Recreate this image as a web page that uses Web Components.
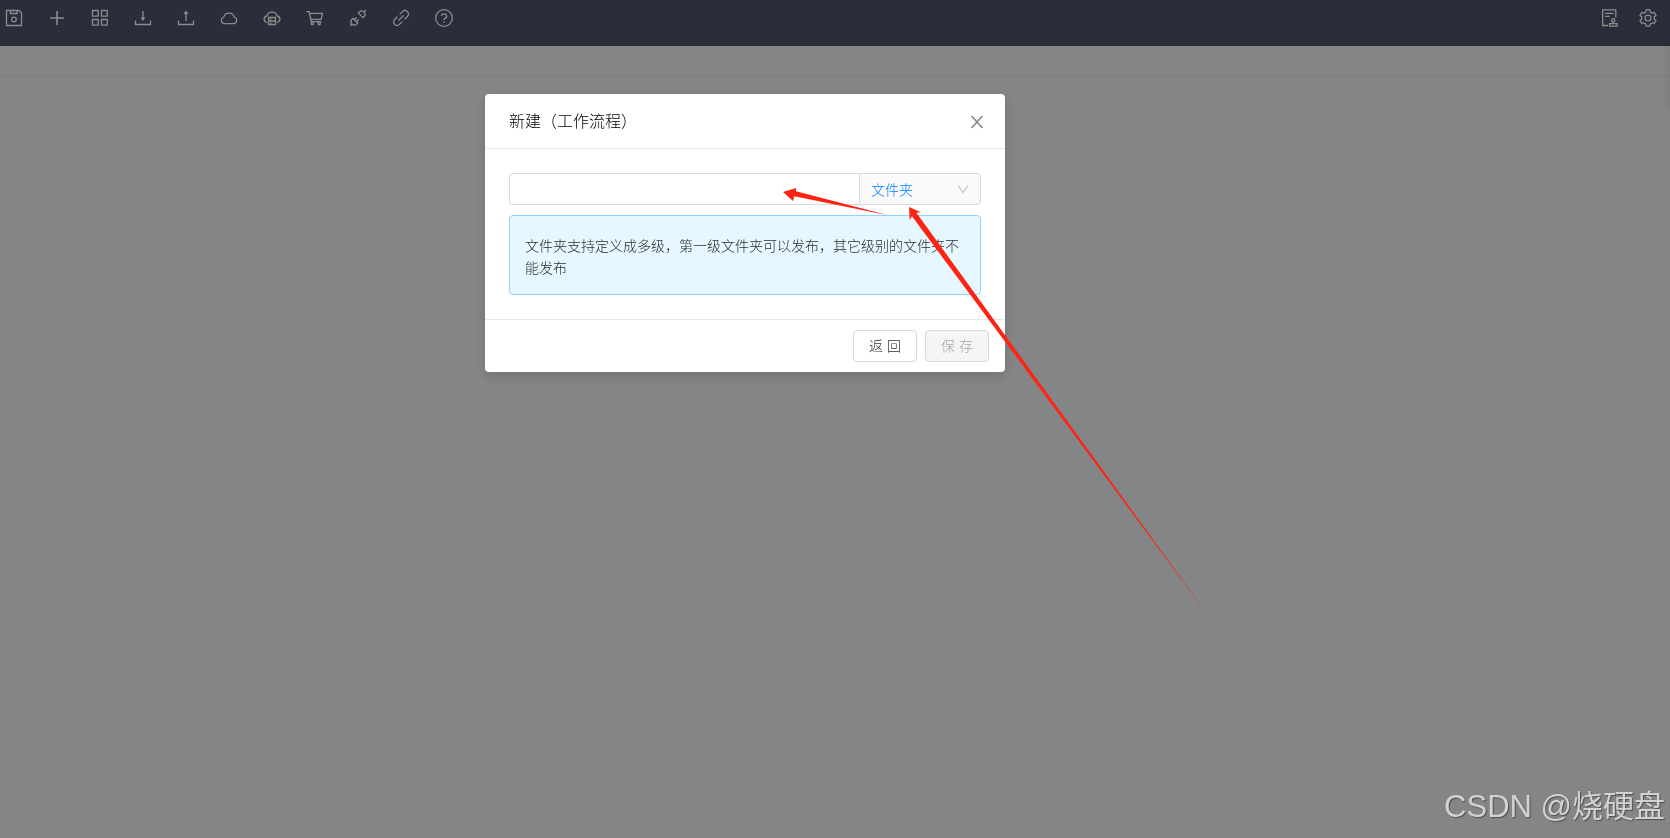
<!DOCTYPE html>
<html lang="zh-CN">
<head>
<meta charset="utf-8">
<title>工作流程</title>
<style>
  body {
    margin: 0;
    font-family: "Liberation Sans", "Noto Sans CJK SC", sans-serif;
    font-size: 14px;
    font-weight: 300;
    line-height: 22px;
    color: rgba(0, 0, 0, 0.85);
    background: #f0f2f5;
  }
</style>
</head>
<body>
<app-shell>
  <tool-button slot="tools" icon="save" label="保存"></tool-button>
  <tool-button slot="tools" icon="plus" label="新建"></tool-button>
  <tool-button slot="tools" icon="grid" label="应用"></tool-button>
  <tool-button slot="tools" icon="download" label="导入"></tool-button>
  <tool-button slot="tools" icon="upload" label="导出"></tool-button>
  <tool-button slot="tools" icon="cloud" label="云"></tool-button>
  <tool-button slot="tools" icon="server" label="云服务"></tool-button>
  <tool-button slot="tools" icon="cart" label="市场"></tool-button>
  <tool-button slot="tools" icon="api" label="接口"></tool-button>
  <tool-button slot="tools" icon="link" label="链接"></tool-button>
  <tool-button slot="tools" icon="help" label="帮助"></tool-button>
  <tool-button slot="settings" icon="audit" label="审核"></tool-button>
  <tool-button slot="settings" icon="gear" label="设置"></tool-button>
</app-shell>

<modal-dialog>
  <span slot="title">新建（工作流程）</span>
  <name-field></name-field>
  <info-alert>文件夹支持定义成多级，第一级文件夹可以发布，其它级别的文件夹不能发布</info-alert>
  <action-button slot="footer">返 回</action-button>
  <action-button slot="footer" disabled>保 存</action-button>
</modal-dialog>

<pointer-arrows></pointer-arrows>
<water-mark>CSDN @烧硬盘</water-mark>

<script>
const icons = {
  save: `<path d="M1.5 1.5h12.5l2.5 2.5v12.5h-15zM5.5 1.5v3h6.5v-3"/><circle cx="9" cy="10.5" r="2.3"/>`,
  plus: `<path d="M9 2v14M2 9h14" stroke-width="1.6"/>`,
  grid: `<path d="M1.5 1.5h5.7v5.7h-5.7zM10.5 1.5h5.7v5.7h-5.7zM1.5 10.5h5.7v5.7h-5.7zM10.5 10.5h5.7v5.7h-5.7z"/>`,
  download: `<path d="M1.5 11.5v4h15v-4M9 2v8"/><path d="M6.5 8.5h5L9 12z" fill="currentColor" stroke="none"/>`,
  upload: `<path d="M1.5 11.5v4h15v-4M9 12V4"/><path d="M6.5 5h5L9 1.5z" fill="currentColor" stroke="none"/>`,
  cloud: `<path d="M4.5 14.6h9.2a3.4 3.4 0 0 0 .6-6.6 5.6 5.6 0 0 0-10.6 0 3.4 3.4 0 0 0 .8 6.6z"/>`,
  server: `<path d="M3.8 13.3a3.2 3.2 0 0 1 0-6.3 5.4 5.4 0 0 1 10.4 0 3.2 3.2 0 0 1 0 6.3M5.5 8.5h7v7h-7zM5.5 12h7M7 10.3h1.3M7 13.8h1.3"/>`,
  cart: `<path d="M.5 2.6h2.7l2.1 10h10.2M3.7 4.3h12.7l-1.2 6.1H5"/><circle cx="6.3" cy="14.6" r="1.2"/><circle cx="13.2" cy="14.6" r="1.2"/>`,
  api: `<path d="M1 17l2.3-2.3M14.7 3.3L17 1M4 9.3l4.7 4.7-1 1a3.3 3.3 0 0 1-4.7-4.7zM9.3 4l4.7 4.7 1-1A3.3 3.3 0 0 0 10.3 3zM5.7 10.5l2-2M7.7 12.5l2-2"/>`,
  link: `<path d="M7.7 5.4l2.8-2.8a3.45 3.45 0 0 1 4.9 4.9l-2.8 2.8M10.3 12.6l-2.8 2.8a3.45 3.45 0 0 1-4.9-4.9l2.8-2.8M6.4 11.6l5.2-5.2"/>`,
  help: `<circle cx="9" cy="9" r="8.3"/><path d="M6.4 7.1a2.6 2.3 0 1 1 3.5 2.2q-.9.4-.9 1.7"/><circle cx="9" cy="13" r=".8" fill="currentColor" stroke="none"/>`,
  audit: `<path d="M7 16.5H1.7V.8h13.1v7.7M4 4.3h8.5M4 7.3h4.7"/><circle cx="12.2" cy="11.2" r="1.6"/><path d="M12.2 12.8v1.7M8.6 14.6h7.6v2.6H8.6z"/>`,
  gear: `<path d="M7.1.8h3.8l.2 2 2.3 1.4 1.7-.9L17 6.5l-1.7 1.1v2.8l1.7 1.1-1.9 3.2-1.7-.9-2.4 1.4-.1 2H7.1l-.1-2-2.4-1.4-1.7.9L1 11.5l1.7-1.1V7.6L1 6.5l1.9-3.2 1.7.9L6.9 2.8z"/><circle cx="9" cy="9" r="2.9"/>`,
};

class ToolButton extends HTMLElement {
  constructor() {
    super();
    this.attachShadow({ mode: "open" });
  }

  connectedCallback() {
    this.shadowRoot.innerHTML = `
    <style>
      :host { display: block; }
      button {
        display: block;
        padding: 0;
        border: 0;
        background: none;
        color: #fff;
        cursor: pointer;
      }
      svg {
        display: block;
        width: 18px;
        height: 18px;
        fill: none;
        stroke: currentColor;
        stroke-width: 1.3;
      }
    </style>
    <button type="button" aria-label="${this.getAttribute("label")}">
      <svg viewBox="0 0 18 18">${icons[this.getAttribute("icon")]}</svg>
    </button>
    `;
  }
}

class AppShell extends HTMLElement {
  constructor() {
    super();
    this.attachShadow({ mode: "open" }).innerHTML = `
    <style>
      :host { display: flex; flex-direction: column; min-height: 100vh; }
      header {
        display: flex;
        justify-content: space-between;
        box-sizing: border-box;
        height: 46px;
        padding: 9px 13px 0 5px;
        background: #4d536b;
      }
      nav { display: flex; gap: 25px; }
      .settings { gap: 20px; }
      .tabs { height: 29px; border-bottom: 1px solid #e1e3e6; }
      main { flex: 1; }
      /* edge of the drawer that is closed on the right */
      .drawer {
        position: absolute;
        top: 0;
        right: 0;
        width: 8px;
        height: 108px;
        background: linear-gradient(to right, transparent, rgba(0, 0, 0, 0.05));
      }
    </style>
    <header>
      <nav><slot name="tools"></slot></nav>
      <nav class="settings"><slot name="settings"></slot></nav>
    </header>
    <div class="tabs"></div>
    <main></main>
    <div class="drawer"></div>
    `;
  }
}

class ModalDialog extends HTMLElement {
  constructor() {
    super();
    this.attachShadow({ mode: "open" }).innerHTML = `
    <style>
      :host {
        position: fixed;
        inset: 0;
        display: flex;
        justify-content: center;
        align-items: flex-start;
        padding: 94px 180px 0 0;
        background: rgba(0, 0, 0, 0.45);
      }
      section {
        width: 520px;
        border-radius: 4px;
        background: #fff;
        box-shadow: 0 4px 12px rgba(0, 0, 0, 0.15);
      }
      header {
        display: flex;
        justify-content: space-between;
        align-items: center;
        padding: 17px 20px 15px 24px;
        border-bottom: 1px solid #e8e8e8;
      }
      h2 {
        margin: 0;
        font-size: 16px;
        font-weight: inherit;
        line-height: 22px;
        color: #000;
      }
      .close {
        display: block;
        padding: 0;
        border: 0;
        background: none;
        color: #858585;
      }
      .close svg {
        display: block;
        width: 16px;
        height: 16px;
        fill: none;
        stroke: currentColor;
        stroke-width: 1.5;
      }
      .body { display: flex; flex-direction: column; gap: 10px; padding: 24px; }
      footer {
        display: flex;
        justify-content: flex-end;
        gap: 8px;
        padding: 10px 16px;
        border-top: 1px solid #e8e8e8;
      }
    </style>
    <section role="dialog" aria-labelledby="title">
      <header>
        <h2 id="title"><slot name="title"></slot></h2>
        <button class="close" type="button" aria-label="关闭">
          <svg viewBox="0 0 16 16"><path d="M2.5 2l11 12M13.5 2l-11 12"/></svg>
        </button>
      </header>
      <div class="body"><slot></slot></div>
      <footer><slot name="footer"></slot></footer>
    </section>
    `;
  }
}

class NameField extends HTMLElement {
  constructor() {
    super();
    this.attachShadow({ mode: "open" }).innerHTML = `
    <style>
      :host { display: flex; }
      input, select {
        box-sizing: border-box;
        height: 32px;
        margin: 0;
        padding: 2px 11px 0;
        border: 1px solid #d9d9d9;
        font: inherit;
        outline: none;
      }
      input {
        flex: 1;
        min-width: 0;
        border-right: 0;
        border-radius: 4px 0 0 4px;
        background: #fff;
      }
      .type { position: relative; width: 122px; }
      select {
        width: 100%;
        appearance: none;
        border-radius: 0 4px 4px 0;
        background: #fafafa;
        color: #0080ff;
      }
      svg {
        position: absolute;
        top: 10px;
        right: 12px;
        width: 12px;
        height: 12px;
        fill: none;
        stroke: #bfbfbf;
        stroke-width: 1.2;
        pointer-events: none;
      }
    </style>
    <input type="text" aria-label="名称">
    <div class="type">
      <select aria-label="类型"><option>文件夹</option></select>
      <svg viewBox="0 0 12 12"><path d="M1 2.5l5 7 5-7"/></svg>
    </div>
    `;
  }
}

class InfoAlert extends HTMLElement {
  constructor() {
    super();
    this.attachShadow({ mode: "open" }).innerHTML = `
    <style>
      :host {
        display: block;
        padding: 19px 15px 15px;
        border: 1px solid #91d5ff;
        border-radius: 4px;
        background: #e6f7ff;
      }
    </style>
    <slot></slot>
    `;
  }
}

class ActionButton extends HTMLElement {
  constructor() {
    super();
    this.attachShadow({ mode: "open" });
  }

  connectedCallback() {
    this.shadowRoot.innerHTML = `
    <style>
      :host { display: block; }
      button {
        display: block;
        box-sizing: border-box;
        min-width: 64px;
        height: 32px;
        padding: 0 15px;
        border: 1px solid #d9d9d9;
        border-radius: 4px;
        background: #fff;
        color: inherit;
        font: inherit;
        white-space: nowrap;
      }
      button:disabled { background: #f5f5f5; color: rgba(0, 0, 0, 0.35); }
    </style>
    <button type="button" ${this.hasAttribute("disabled") ? "disabled" : ""}><slot></slot></button>
    `;
  }
}

class PointerArrows extends HTMLElement {
  constructor() {
    super();
    this.attachShadow({ mode: "open" }).innerHTML = `
    <style>
      :host { position: absolute; top: 0; left: 0; pointer-events: none; }
      svg { display: block; fill: #ff2313; }
    </style>
    <svg width="1220" height="630" viewBox="0 0 1220 630" aria-hidden="true">
      <path d="M783 192L796 188L796 191.3L889 215.5L794.3 196.3L793 201z"/>
      <path d="M909 207L921 212.3L916.4 212.7L1210 618L912 216.3L909.7 220z"/>
    </svg>
    `;
  }
}

class WaterMark extends HTMLElement {
  constructor() {
    super();
    this.attachShadow({ mode: "open" }).innerHTML = `
    <style>
      :host {
        position: fixed;
        right: 5px;
        bottom: 7px;
        font-size: 31px;
        font-weight: 400;
        line-height: 48px;
        color: #d2d2d2;
        text-shadow: 1px 1px 1px rgba(0, 0, 0, 0.4);
      }
    </style>
    <slot></slot>
    `;
  }
}

customElements.define("tool-button", ToolButton);
customElements.define("app-shell", AppShell);
customElements.define("modal-dialog", ModalDialog);
customElements.define("name-field", NameField);
customElements.define("info-alert", InfoAlert);
customElements.define("action-button", ActionButton);
customElements.define("pointer-arrows", PointerArrows);
customElements.define("water-mark", WaterMark);
</script>
</body>
</html>
